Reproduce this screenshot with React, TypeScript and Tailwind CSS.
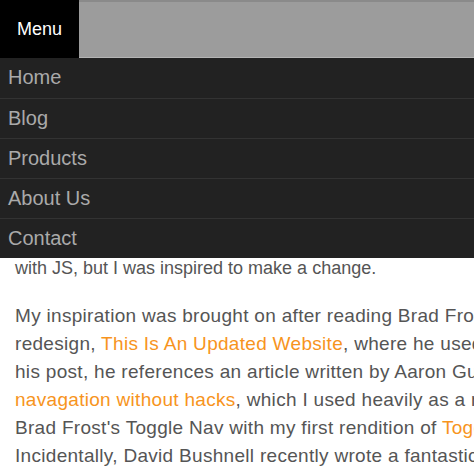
const LINKS = ["Home", "Blog", "Products", "About Us", "Contact"];

const A = ({ children }: { children: React.ReactNode }) => (
  <a href="#" className="text-[#f7941d]">
    {children}
  </a>
);

export default function App() {
  return (
    <div className="relative h-[474px] w-[474px] overflow-hidden bg-white font-['Liberation_Sans',Arial,sans-serif]">
      <header className="relative z-20 flex h-[58px]">
        <div className="flex w-[79px] items-center justify-center bg-black text-[18px] text-white">
          Menu
        </div>
        <div className="flex-1 border-t-2 border-b border-t-[#8a8a8a] border-b-[#b4b4b4] bg-[#9c9c9c]" />
        <nav className="absolute top-full left-0 w-full bg-[#222222]">
          {LINKS.map((l, i) => (
            <a
              key={l}
              href="#"
              className={`flex h-10 items-center px-2 pb-0.5 text-[20px] text-[#aaaaaa] ${
                i > 0 ? "border-t border-[#333333]" : ""
              }`}
            >
              {l}
            </a>
          ))}
        </nav>
      </header>

      <main className="px-[15px] pt-[196px] text-[18px] leading-[28px] whitespace-nowrap text-[#555555]">
        <p>with JS, but I was inspired to make a change.</p>
        <p className="mt-5 text-[19px] tracking-[0.3px]">
          My inspiration was brought on after reading Brad Frost's
          <br />
          redesign, <A>This Is An Updated Website</A>, where he used
          <br />
          his post, he references an article written by Aaron Gustafson
          <br />
          <A>navagation without hacks</A>, which I used heavily as a reference
          <br />
          Brad Frost's Toggle Nav with my first rendition of <A>Toggle</A>
          <br />
          Incidentally, David Bushnell recently wrote a fantastic article
        </p>
      </main>
    </div>
  );
}
